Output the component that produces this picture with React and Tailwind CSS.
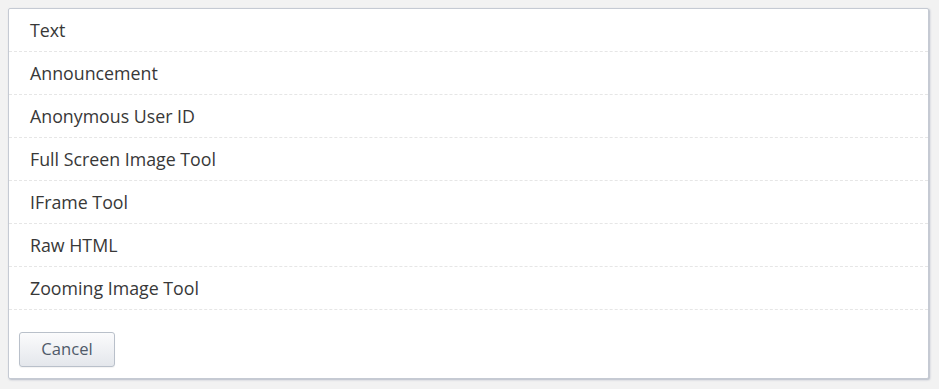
const tools = [
  "Text",
  "Announcement",
  "Anonymous User ID",
  "Full Screen Image Tool",
  "IFrame Tool",
  "Raw HTML",
  "Zooming Image Tool",
];

export default function App() {
  return (
    <div className="h-[389px] w-[939px] bg-[#f2f2f2] p-2 font-['Open_Sans',sans-serif]">
      <div className="w-[921px] rounded-[2px] border border-[#c5cad3] bg-white shadow-[1px_1px_2px_rgba(140,150,170,0.6)]">
        <ul>
          {tools.map((name) => (
            <li
              key={name}
              className="flex h-[43px] items-center border-b border-dashed border-[#e6e6e6] pl-[21px] text-[17.8px] text-[#383838]"
            >
              {name}
            </li>
          ))}
        </ul>
        <div className="px-[10px] pt-[22px] pb-[11px]">
          <button className="h-[35px] w-[96px] rounded-[3px] border border-[#b9c0ca] bg-gradient-to-b from-[#fbfbfc] to-[#e4e7ec] text-[16.6px] text-[#4f5a69] shadow-[0_1px_1px_rgba(0,0,0,0.05)]">
            Cancel
          </button>
        </div>
      </div>
    </div>
  );
}
